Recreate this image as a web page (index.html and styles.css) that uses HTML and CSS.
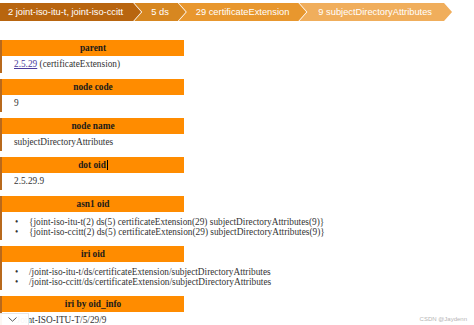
FILE: index.html
```html
<!DOCTYPE html>
<html>
   <head>
      <meta charset="UTF-8">
      <meta name="viewport" content="width=device-width, initial-scale=1.0"/>
      <title>subjectDirectoryAttributes OID</title>
      <link rel="stylesheet" href="styles.css">
   </head>
   <body>
      <nav class="crumbs">
         <a class="crumb crumb-1" href="#">2 joint-iso-itu-t, joint-iso-ccitt</a>
         <a class="crumb crumb-2" href="#">5 ds</a>
         <a class="crumb crumb-3" href="#">29 certificateExtension</a>
         <span class="crumb crumb-4">9 subjectDirectoryAttributes</span>
      </nav>

      <div class="details">
         <div class="field">
            <div class="field-title">parent</div>
            <div class="field-body"><a href="#">2.5.29</a> (certificateExtension)</div>
         </div>

         <div class="field">
            <div class="field-title">node code</div>
            <div class="field-body">9</div>
         </div>

         <div class="field">
            <div class="field-title">node name</div>
            <div class="field-body">subjectDirectoryAttributes</div>
         </div>

         <div class="field">
            <div class="field-title">dot oid<span class="caret"></span></div>
            <div class="field-body">2.5.29.9</div>
         </div>

         <div class="field">
            <div class="field-title">asn1 oid</div>
            <ul class="field-list">
               <li>{joint-iso-itu-t(2) ds(5) certificateExtension(29) subjectDirectoryAttributes(9)}</li>
               <li>{joint-iso-ccitt(2) ds(5) certificateExtension(29) subjectDirectoryAttributes(9)}</li>
            </ul>
         </div>

         <div class="field">
            <div class="field-title">iri oid</div>
            <ul class="field-list">
               <li>/joint-iso-itu-t/ds/certificateExtension/subjectDirectoryAttributes</li>
               <li>/joint-iso-ccitt/ds/certificateExtension/subjectDirectoryAttributes</li>
            </ul>
         </div>

         <div class="field">
            <div class="field-title">iri by oid_info</div>
            <div class="field-body">/Joint-ISO-ITU-T/5/29/9</div>
         </div>
      </div>

      <div class="collapse-btn">
         <svg width="9" height="5" viewBox="0 0 9 5">
            <path d="M0.5 0.5 L4.5 4.2 L8.5 0.5" fill="none" stroke="#555" stroke-width="1"/>
         </svg>
      </div>

      <small class="watermark">CSDN @Jaydenn</small>
   </body>
</html>
```

FILE: styles.css
```css
*
{
   box-sizing: border-box;
}

html,
body
{
   overflow: hidden;
}

body
{
   margin: 0;
   font-family: "Liberation Serif", "Times New Roman", serif;
   font-size: 9.3px;
   color: #333333;
   background: #ffffff;
}

/* breadcrumb */

.crumbs
{
   display: flex;
   margin-top: 3px;
   height: 18px;
   font-family: "Liberation Sans", Arial, sans-serif;
   font-size: 9.3px;
}

.crumb
{
   display: block;
   height: 18px;
   line-height: 18px;
   padding: 0 17px 0 17px;
   margin-left: -7px;
   color: #ffffff;
   text-decoration: none;
   white-space: nowrap;
   clip-path: polygon(0 0, calc(100% - 8px) 0, 100% 50%, calc(100% - 8px) 100%, 0 100%, 8px 50%);
}

.crumb-1
{
   margin-left: 0;
   padding-left: 8px;
   padding-right: 18px;
   background: #b8650f;
   clip-path: polygon(0 0, calc(100% - 8px) 0, 100% 50%, calc(100% - 8px) 100%, 0 100%);
}

.crumb-2
{
   background: #d78720;
}

.crumb-3
{
   background: #e8972e;
}

.crumb-4
{
   padding-left: 19px;
   padding-right: 20px;
   background: #f0ae5c;
}

/* detail fields */

.details
{
   margin-top: 19px;
}

.field
{
   width: 184px;
   margin-bottom: 6px;
   border-left: 2px solid #b8691c;
}

.field-title
{
   height: 16px;
   line-height: 16px;
   text-align: center;
   font-weight: bold;
   color: #1a1a1a;
   background: #ff8c00;
}

.caret
{
   display: inline-block;
   width: 1px;
   height: 10px;
   margin-left: 1px;
   vertical-align: -2px;
   background: #000000;
}

.field-body
{
   height: 17px;
   line-height: 17px;
   padding-left: 12px;
   white-space: nowrap;
}

.field-body a
{
   color: #4a3b9c;
}

.field-list
{
   list-style: none;
   margin: 0;
   padding: 5px 0 3px 12px;
   line-height: 10px;
   white-space: nowrap;
}

.field-list li::before
{
   content: "•";
   display: inline-block;
   width: 14px;
   padding-left: 1px;
}

/* overlays */

.collapse-btn
{
   position: absolute;
   left: 0;
   bottom: 0;
   width: 29px;
   height: 12px;
   padding: 3px 0 0 8px;
   background: rgba(255, 255, 255, 0.95);
   border-top: 1px solid #e6e6e6;
   border-right: 1px solid #e6e6e6;
}

.collapse-btn svg
{
   display: block;
}

.watermark
{
   position: absolute;
   right: 7px;
   bottom: 3px;
   font-family: "Liberation Sans", Arial, sans-serif;
   font-size: 6px;
   color: #b5b5b5;
}
```
